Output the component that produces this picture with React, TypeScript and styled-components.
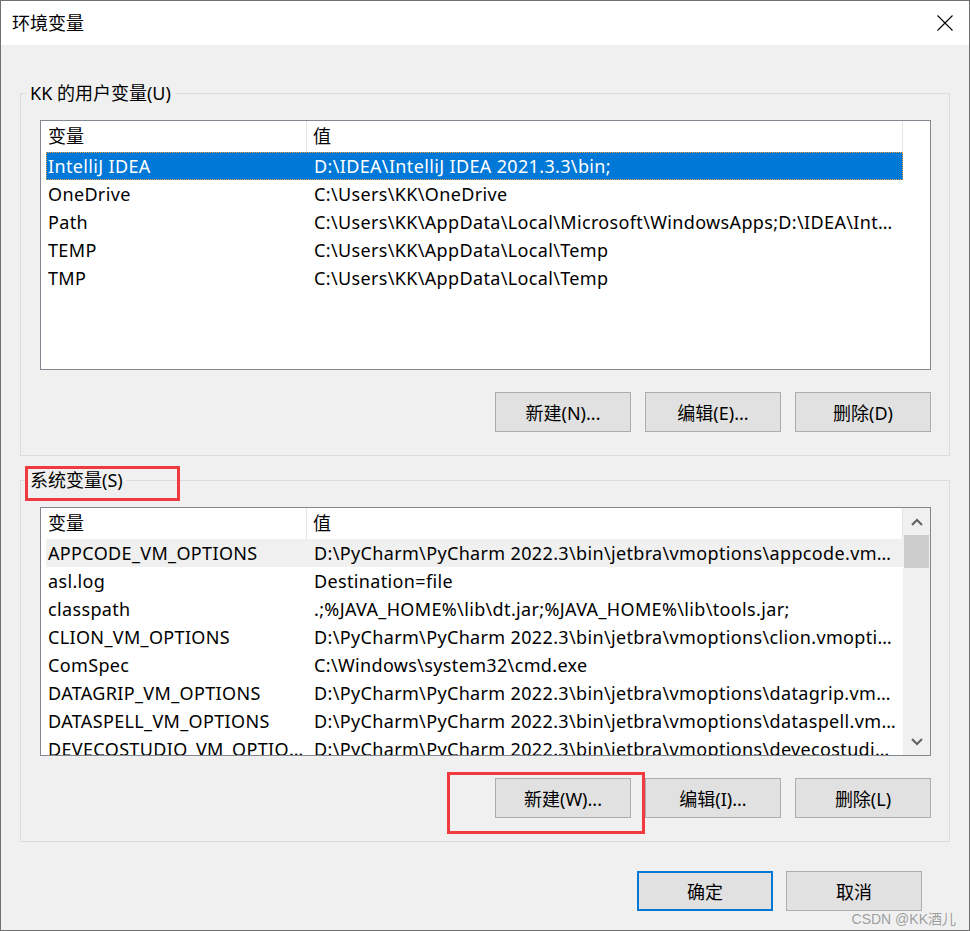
import React from 'react'
import styled, { createGlobalStyle } from 'styled-components'

const GlobalStyle = createGlobalStyle`
  html, body {
    margin: 0;
    padding: 0;
    background: #f0f0f0;
  }
  body {
    font-family: "Noto Sans", "Noto Sans CJK SC", sans-serif;
  }
`

type Row = { name: string; value: string }

const userRows: Row[] = [
    { name: 'IntelliJ IDEA', value: 'D:\\IDEA\\IntelliJ IDEA 2021.3.3\\bin;' },
    { name: 'OneDrive', value: 'C:\\Users\\KK\\OneDrive' },
    { name: 'Path', value: 'C:\\Users\\KK\\AppData\\Local\\Microsoft\\WindowsApps;D:\\IDEA\\IntelliJ IDEA 2021.3.3\\bin;' },
    { name: 'TEMP', value: 'C:\\Users\\KK\\AppData\\Local\\Temp' },
    { name: 'TMP', value: 'C:\\Users\\KK\\AppData\\Local\\Temp' },
]

const sysRows: Row[] = [
    { name: 'APPCODE_VM_OPTIONS', value: 'D:\\PyCharm\\PyCharm 2022.3\\bin\\jetbra\\vmoptions\\appcode.vmoptions' },
    { name: 'asl.log', value: 'Destination=file' },
    { name: 'classpath', value: '.;%JAVA_HOME%\\lib\\dt.jar;%JAVA_HOME%\\lib\\tools.jar;' },
    { name: 'CLION_VM_OPTIONS', value: 'D:\\PyCharm\\PyCharm 2022.3\\bin\\jetbra\\vmoptions\\clion.vmoptions' },
    { name: 'ComSpec', value: 'C:\\Windows\\system32\\cmd.exe' },
    { name: 'DATAGRIP_VM_OPTIONS', value: 'D:\\PyCharm\\PyCharm 2022.3\\bin\\jetbra\\vmoptions\\datagrip.vmoptions' },
    { name: 'DATASPELL_VM_OPTIONS', value: 'D:\\PyCharm\\PyCharm 2022.3\\bin\\jetbra\\vmoptions\\dataspell.vmoptions' },
    { name: 'DEVECOSTUDIO_VM_OPTIONS', value: 'D:\\PyCharm\\PyCharm 2022.3\\bin\\jetbra\\vmoptions\\devecostudio.vmoptions' },
    { name: 'DRIVERDATA', value: 'C:\\Windows\\System32\\Drivers\\DriverData' },
]

// 窗口
const Window = styled.div`
  position: relative;
  box-sizing: border-box;
  width: 970px;
  height: 931px;
  border: 1px solid #707070;
  background: #f0f0f0;
  display: flex;
  flex-direction: column;
  font-size: 18px;
  color: #000;
`

const TitleBar = styled.div`
  height: 44px;
  flex-shrink: 0;
  background: #fff;
  display: flex;
  align-items: center;
  justify-content: space-between;
  padding: 0 16px 0 11px;
`

const Title = styled.div`
  font-size: 18px;
  line-height: 24px;
`

const Body = styled.div`
  display: flex;
  flex-direction: column;
  padding: 0 19px;
`

const Group = styled.fieldset<{ $top: number }>`
  margin: ${p => p.$top}px 0 0;
  padding: 0;
  min-width: 0;
  border: 1px solid #dcdcdc;
`

const Legend = styled.legend`
  margin-left: 5px;
  padding: 0 4px;
  line-height: 24px;
  font-size: 18px;
`

const GroupBody = styled.div`
  padding: 15px 18px 23px 19px;
`

const ListBox = styled.div<{ $h: number }>`
  box-sizing: border-box;
  height: ${p => p.$h}px;
  border: 1px solid #828790;
  background: #fff;
  display: flex;
  overflow: hidden;
`

const ListContent = styled.div`
  width: 862px;
  flex-shrink: 0;
  display: flex;
  flex-direction: column;
`

const Header = styled.div`
  display: grid;
  grid-template-columns: 266px 596px;
  height: 31px;
  flex-shrink: 0;
`

const HeaderCell = styled.div<{ $pad: number }>`
  box-sizing: border-box;
  padding-left: ${p => p.$pad}px;
  border-right: 1px solid #e5e5e5;
  line-height: 31px;
  white-space: nowrap;
`

const ListRow = styled.div<{ $selected?: boolean; $hover?: boolean }>`
  box-sizing: border-box;
  margin-left: 5px;
  width: 857px;
  height: 28px;
  flex-shrink: 0;
  display: grid;
  grid-template-columns: 261px 596px;
  line-height: 26px;
  border: 1px ${p => (p.$selected ? 'dotted #f3a43a' : 'solid transparent')};
  background: ${p => (p.$selected ? '#0078d7' : p.$hover ? '#f0f0f0' : 'transparent')};
  color: ${p => (p.$selected ? '#fff' : '#000')};
`

const Cell = styled.div<{ $pad: number }>`
  box-sizing: border-box;
  padding-left: ${p => p.$pad}px;
  padding-right: 4px;
  letter-spacing: 0.35px;
  white-space: nowrap;
  overflow: hidden;
  text-overflow: ellipsis;
`

const Filler = styled.div`
  flex: 1;
`

const ScrollBar = styled.div`
  flex: 1;
  background: #f0f0f0;
  display: flex;
  flex-direction: column;
`

const ArrowBtn = styled.div`
  height: 27px;
  flex-shrink: 0;
  display: flex;
  align-items: center;
  justify-content: center;
`

const Thumb = styled.div`
  height: 33px;
  margin: 0 1px;
  background: #cdcdcd;
`

const Track = styled.div`
  flex: 1;
`

const ButtonRow = styled.div`
  display: flex;
  justify-content: flex-end;
  gap: 14px;
  margin-top: 22px;
`

const Button = styled.button<{ $primary?: boolean }>`
  box-sizing: border-box;
  width: 136px;
  height: 40px;
  padding: 0;
  margin: 0;
  background: #e1e1e1;
  border: ${p => (p.$primary ? '2px solid #0078d7' : '1px solid #adadad')};
  border-radius: 0;
  font-family: "Noto Sans", "Noto Sans CJK SC", sans-serif;
  font-size: 18px;
  color: #000;
`

const Footer = styled.div`
  display: flex;
  justify-content: flex-end;
  gap: 13px;
  margin-top: 29px;
  padding-right: 47px;
`

// 红框标注
const Mark = styled.div<{ $x: number; $y: number; $w: number; $h: number }>`
  position: absolute;
  left: ${p => p.$x}px;
  top: ${p => p.$y}px;
  width: ${p => p.$w}px;
  height: ${p => p.$h}px;
  box-sizing: border-box;
  border: 3px solid #ef3a3f;
  pointer-events: none;
`

const Watermark = styled.div`
  position: absolute;
  right: 13px;
  bottom: 2px;
  font-size: 14px;
  color: rgba(120, 120, 120, 0.7);
  font-family: "Liberation Sans", "Noto Sans CJK SC", sans-serif;
`

const Chevron = ({ up }: { up?: boolean }) => (
    <svg width="12" height="8" viewBox="0 0 12 8">
        <polyline
            points={up ? '1,7 6,2 11,7' : '1,1 6,6 11,1'}
            fill="none"
            stroke="#606060"
            strokeWidth="2"
        />
    </svg>
)

const CloseIcon = () => (
    <svg width="16" height="16" viewBox="0 0 16 16">
        <path d="M0.5 0.5 L15.5 15.5 M15.5 0.5 L0.5 15.5" stroke="#000" strokeWidth="1.1" />
    </svg>
)

type ListProps = { rows: Row[]; height: number; scroll?: boolean; selected?: number; hover?: number }

const VarList = ({ rows, height, scroll, selected, hover }: ListProps) => (
    <ListBox $h={height}>
        <ListContent>
            <Header>
                <HeaderCell $pad={7}>变量</HeaderCell>
                <HeaderCell $pad={6}>值</HeaderCell>
            </Header>
            {rows.map((r, i) => (
                <ListRow key={r.name} $selected={i === selected} $hover={i === hover}>
                    <Cell $pad={1}>{r.name}</Cell>
                    <Cell $pad={6}>{r.value}</Cell>
                </ListRow>
            ))}
        </ListContent>
        {scroll ? (
            <ScrollBar>
                <ArrowBtn><Chevron up /></ArrowBtn>
                <Thumb />
                <Track />
                <ArrowBtn><Chevron /></ArrowBtn>
            </ScrollBar>
        ) : <Filler />}
    </ListBox>
)

const App: React.FC = () => {
    return (
        <>
            <GlobalStyle />
            <Window>
                <TitleBar>
                    <Title>环境变量</Title>
                    <CloseIcon />
                </TitleBar>
                <Body>
                    {/* 用户变量 */}
                    <Group $top={36}>
                        <Legend>KK 的用户变量(U)</Legend>
                        <GroupBody>
                            <VarList rows={userRows} height={250} selected={0} />
                            <ButtonRow>
                                <Button>新建(N)...</Button>
                                <Button>编辑(E)...</Button>
                                <Button>删除(D)</Button>
                            </ButtonRow>
                        </GroupBody>
                    </Group>
                    {/* 系统变量 */}
                    <Group $top={12}>
                        <Legend>系统变量(S)</Legend>
                        <GroupBody>
                            <VarList rows={sysRows} height={249} scroll hover={0} />
                            <ButtonRow>
                                <Button>新建(W)...</Button>
                                <Button>编辑(I)...</Button>
                                <Button>删除(L)</Button>
                            </ButtonRow>
                        </GroupBody>
                    </Group>
                </Body>
                <Footer>
                    <Button $primary>确定</Button>
                    <Button>取消</Button>
                </Footer>
                <Mark $x={24} $y={465} $w={155} $h={35} />
                <Mark $x={446} $y={771} $w={198} $h={62} />
                <Watermark>CSDN @KK酒儿</Watermark>
            </Window>
        </>
    )
}

export default App
